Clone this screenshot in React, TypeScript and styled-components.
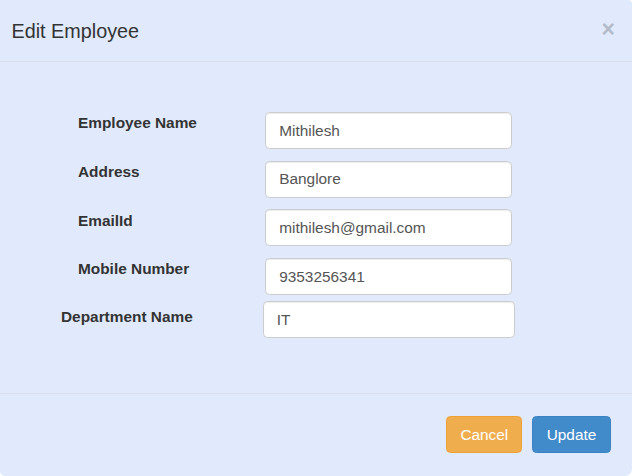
import React from "react";
import styled, { createGlobalStyle } from "styled-components";

const GlobalStyle = createGlobalStyle`
  html, body {
    margin: 0;
    padding: 0;
    background: #ffffff;
  }
  body {
    font-family: "Liberation Sans", Arial, sans-serif;
  }
  * { box-sizing: border-box; }
`;

const Modal = styled.div`
  width: 632px;
  height: 476px;
  background: #e1eafc;
  border-radius: 0 4px 7px 5px;
  display: flex;
  flex-direction: column;
  overflow: hidden;
`;

const Header = styled.div`
  height: 62px;
  padding: 16.5px 17px 0 11.5px;
  border-bottom: 1px solid #d9e0ec;
  display: flex;
  justify-content: space-between;
  align-items: flex-start;
`;

const Title = styled.h4`
  margin: 0;
  font-size: 19.8px;
  line-height: 28.3px;
  font-weight: 400;
  color: #333333;
`;

const Close = styled.button`
  border: 0;
  background: transparent;
  padding: 0;
  margin-top: -4px;
  font-family: "Liberation Sans", Arial, sans-serif;
  font-size: 23px;
  font-weight: 700;
  line-height: 1.4;
  color: #000000;
  opacity: 0.2;
  cursor: pointer;
`;

const Body = styled.div`
  padding: 50px 0 55px;
  display: flex;
  flex-direction: column;
  border-bottom: 1px solid #d9e0ec;
`;

const Row = styled.div<{ $indent: number; $labelWidth: number; $mt: number }>`
  display: flex;
  align-items: flex-start;
  padding-left: ${(p) => p.$indent}px;
  margin-top: ${(p) => p.$mt}px;

  & > label {
    width: ${(p) => p.$labelWidth}px;
  }
`;

const Label = styled.label<{ $offset: number }>`
  flex: none;
  padding-top: ${(p) => p.$offset}px;
  font-size: 15.4px;
  line-height: 1;
  font-weight: 700;
  color: #333333;
`;

const Input = styled.input<{ $width: number }>`
  width: ${(p) => p.$width}px;
  height: 37px;
  padding: 0 13.2px;
  border: 1px solid #cccccc;
  border-radius: 4.4px;
  background: #ffffff;
  box-shadow: inset 0 1px 1px rgba(0, 0, 0, 0.075);
  font-family: "Liberation Sans", Arial, sans-serif;
  font-size: 15.4px;
  color: #555555;
  outline: none;
`;

const Footer = styled.div`
  flex: 1;
  display: flex;
  justify-content: flex-end;
  align-items: flex-start;
  gap: 10px;
  padding: 21.5px 21.5px 0 0;
`;

const Button = styled.button<{ $variant: "warning" | "primary" }>`
  height: 37.7px;
  padding: 0 13.2px;
  border-radius: 4.4px;
  border: 1px solid
    ${(p) => (p.$variant === "warning" ? "#eea236" : "#3a82c4")};
  background: ${(p) => (p.$variant === "warning" ? "#f0ad4e" : "#428bca")};
  color: #ffffff;
  font-family: "Liberation Sans", Arial, sans-serif;
  font-size: 15.4px;
  line-height: 1;
  cursor: pointer;
`;

type Field = {
  label: string;
  value: string;
  indent: number;
  labelWidth: number;
  offset: number;
  width: number;
  mt: number;
};

const fields: Field[] = [
  { label: "Employee Name", value: "Mithilesh", indent: 78, labelWidth: 187, offset: 3, width: 247, mt: 0 },
  { label: "Address", value: "Banglore", indent: 78, labelWidth: 187, offset: 3.5, width: 247, mt: 11.7 },
  { label: "EmailId", value: "mithilesh@gmail.com", indent: 78, labelWidth: 187, offset: 3.8, width: 247, mt: 11.7 },
  { label: "Mobile Number", value: "9353256341", indent: 78, labelWidth: 187, offset: 3, width: 247, mt: 11.7 },
  { label: "Department Name", value: "IT", indent: 61, labelWidth: 201.5, offset: 8, width: 252, mt: 6 },
];

export default function App() {
  return (
    <>
      <GlobalStyle />
      <Modal>
        <Header>
          <Title>Edit Employee</Title>
          <Close aria-label="Close">×</Close>
        </Header>
        <Body>
          {fields.map((f) => (
            <Row key={f.label} $indent={f.indent} $labelWidth={f.labelWidth} $mt={f.mt}>
              <Label $offset={f.offset}>{f.label}</Label>
              <Input $width={f.width} defaultValue={f.value} />
            </Row>
          ))}
        </Body>
        <Footer>
          <Button $variant="warning">Cancel</Button>
          <Button $variant="primary">Update</Button>
        </Footer>
      </Modal>
    </>
  );
}
